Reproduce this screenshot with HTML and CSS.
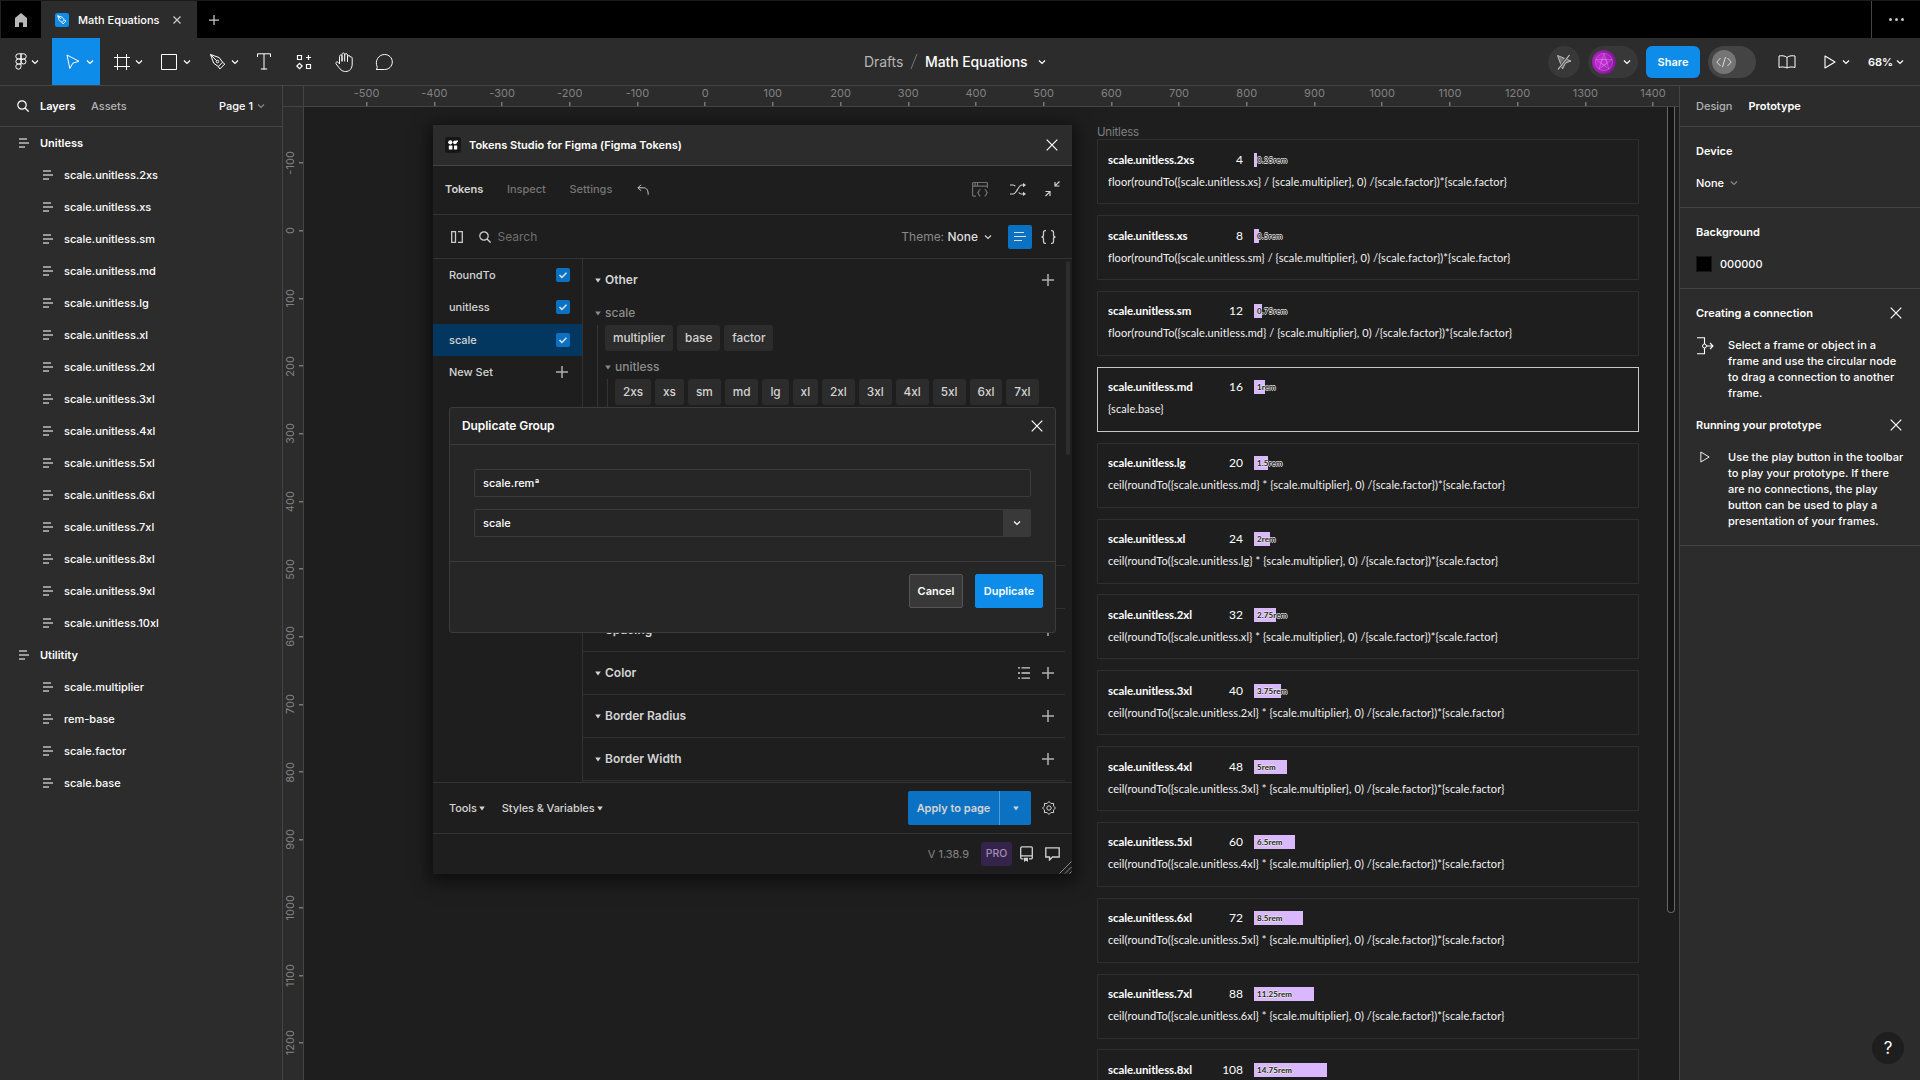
FILE: index.html
```html
<!DOCTYPE html>
<html lang="en">
<head>
<meta charset="utf-8">
<title>Math Equations</title>
<link rel="stylesheet" href="styles.css">
</head>
<body>
<svg class="defs" width="0" height="0">
  <symbol id="chev" viewBox="0 0 8 8"><path d="M1 2.500l3 3 3-3" fill="none" stroke="currentColor" stroke-width="1.200"/></symbol>
  <symbol id="rows" viewBox="0 0 10 10"><path d="M0 1h8M0 5h10M0 9h6" stroke="currentColor" stroke-width="2"/></symbol>
  <symbol id="close" viewBox="0 0 12 12"><path d="M.7.7l10.600 10.600M11.300.7L.7 11.300" stroke="currentColor" stroke-width="1.200"/></symbol>
  <symbol id="close-small" viewBox="0 0 8 8"><path d="M.5.5l7 7M7.500.5l-7 7" stroke="currentColor" stroke-width="1.200"/></symbol>
  <symbol id="plus" viewBox="0 0 12 12"><path d="M6 0v12M0 6h12" stroke="currentColor" stroke-width="1.500"/></symbol>
  <symbol id="tri" viewBox="0 0 6 5"><path d="M.2.5h5.600L3 4.600z" fill="currentColor"/></symbol>
  <symbol id="search" viewBox="0 0 12 12"><circle cx="5" cy="5" r="4.200" fill="none" stroke="currentColor" stroke-width="1.200"/><path d="M8 8l3.600 3.600" stroke="currentColor" stroke-width="1.300"/></symbol>
  <symbol id="check" viewBox="0 0 14 14"><path d="M3.500 7l2.400 2.500 4.600-4.800" fill="none" stroke="currentColor" stroke-width="1.500"/></symbol>
  <symbol id="play" viewBox="0 0 12 14"><path d="M1 1v12l10-6z" fill="none" stroke="currentColor" stroke-width="1.100" stroke-linejoin="round"/></symbol>
  <symbol id="pen" viewBox="0 0 18 18"><path d="M1.500 1.500l3.200 8.700 4.600 3.300 4.300-4.300L10.200 4.600zM1.500 1.500l6.200 6.200M9.300 13.500l1.500 2.500 5-5-2.300-1.700" fill="none" stroke="currentColor" stroke-linejoin="round"/><circle cx="8.500" cy="8.500" r="1.300" fill="none" stroke="currentColor"/></symbol>
</svg>

<header class="tabbar">
  <div class="home"><svg width="14" height="14" viewBox="0 0 14 14"><path d="M7 0L1 5v9h4V9.500h4V14h4V5z" fill="#b8b8b8"/></svg></div>
  <div class="tab">
    <span class="file-icon"><svg width="10" height="10" viewBox="0 0 10 10"><path d="M.7.700l1.500 4.600 2.800 2L7.300 5l-2-2.800zM.7.700l3.300 3.300M5 7.300l1 1.700 3-3-1.700-1" fill="none" stroke="#fff" stroke-width=".9"/></svg></span>
    <span class="tab-name">Math Equations</span>
    <svg class="tab-close" width="8" height="8"><use href="#close-small"/></svg>
  </div>
  <svg class="tab-add" width="10" height="10"><use href="#plus"/></svg>
  <div class="tab-more"><i></i><i></i><i></i></div>
</header>

<div class="toolbar">
  <div class="tools">
    <div class="tool fig"><svg width="12" height="17" viewBox="0 0 12 17"><path d="M6 .8H3.400a2.600 2.600 0 0 0 0 5.200H6zM6 .8h2.600a2.600 2.600 0 0 1 0 5.200H6zM6 6H3.400a2.500 2.500 0 0 0 0 5H6zM6 11H3.400A2.600 2.600 0 1 0 6 13.600z" fill="none" stroke="currentColor"/><circle cx="8.500" cy="8.500" r="2.500" fill="none" stroke="currentColor"/></svg><svg width="8" height="8"><use href="#chev"/></svg></div>
    <div class="tool active"><svg width="14" height="16" viewBox="0 0 14 16"><path d="M1 1l12 6.300-6 1.700-3.200 5.500z" fill="none" stroke="currentColor" stroke-linejoin="round"/></svg><svg width="8" height="8"><use href="#chev"/></svg></div>
    <div class="tool grid"><svg width="16" height="16" viewBox="0 0 16 16"><path d="M3.500 0v16M12.500 0v16M0 3.500h16M0 12.500h16" stroke="currentColor"/></svg><svg width="8" height="8"><use href="#chev"/></svg></div>
    <div class="tool"><svg width="16" height="16" viewBox="0 0 16 16"><path d="M.5.5h15v15H.5z" fill="none" stroke="currentColor"/></svg><svg width="8" height="8"><use href="#chev"/></svg></div>
    <div class="tool pen"><svg width="18" height="18"><use href="#pen"/></svg><svg width="8" height="8"><use href="#chev"/></svg></div>
    <div class="tool single"><svg width="14" height="17" viewBox="0 0 14 17"><path d="M.5 4V.8h13V4M7 1v15.500M3.800 16h6.400" fill="none" stroke="currentColor"/></svg></div>
    <div class="tool single"><svg width="16" height="16" viewBox="0 0 16 16"><path d="M1.500 1.500h4v4h-4zM10.500 10.500h4v4h-4zM3.500 9.300l2.700 2.700-2.700 2.700L.8 12zM12.500 1v5M10 3.500h5" fill="none" stroke="currentColor" stroke-width="1.200"/></svg></div>
    <div class="tool single"><svg width="18" height="20" viewBox="0 0 18 20"><path d="M4.500 11.500V4.500c0-2 2.500-2 2.500 0V9M7 9V2.500c0-2 2.700-2 2.700 0V9M9.700 3c0-2 2.800-2 2.800.2V9.500M12.500 5c0-2 2.700-2 2.700 0v0c1.200-.5 2 .2 2 1.500V12c0 4.500-2.500 7.500-6.500 7.500-4 0-5.200-1.800-9.500-7.500-1-1.800.8-3 2.300-1.300l1 1" fill="none" stroke="currentColor" stroke-linecap="round"/></svg></div>
    <div class="tool single"><svg width="18" height="18" viewBox="0 0 18 18"><path d="M1 16.500c1-.5 1.200-2 1.200-2.700C-.5 8 3.500 1.500 9.500 1.500c4.500 0 7.800 3.300 7.800 7.500s-3.300 7.500-7.800 7.500z" fill="none" stroke="currentColor" stroke-linejoin="round"/></svg></div>
  </div>
  <div class="doc"><span class="drafts">Drafts</span><svg class="slash" width="8" height="17" viewBox="0 0 8 17"><path d="M1 16L7 1" stroke="currentColor"/></svg><span class="doc-name">Math Equations</span><svg width="8" height="8"><use href="#chev"/></svg></div>
  <div class="actions">
    <div class="round"><svg width="18" height="18" viewBox="0 0 18 18"><path d="M2.500 2.500L16 8l-5.500 2L7.500 16z" fill="#777" stroke="#bbb"/><path d="M14.500 1.500L2.500 17" stroke="#383838" stroke-width="2.600"/><path d="M14.500 2L3 16.500" stroke="#ccc" stroke-width="1.200"/></svg></div>
    <div class="user"><span class="avatar"><svg width="24" height="24" viewBox="0 0 24 24"><g fill="none" stroke="#d9a5e8" stroke-opacity=".5" stroke-width=".7"><circle cx="12" cy="12" r="8.500"/><circle cx="12" cy="12" r="3"/><path d="M12 3.500L17 19 4 9.500h16L7 19z"/></g></svg></span><svg width="8" height="8"><use href="#chev"/></svg></div>
    <div class="share">Share</div>
    <div class="devmode"><span class="knob"><svg width="16" height="10" viewBox="0 0 16 10"><path d="M4.500 1L.8 5l3.700 4M11.500 1l3.700 4-3.700 4M9.500 0l-3 10" fill="none" stroke="#ddd"/></svg></span></div>
    <svg class="book" width="18" height="14" viewBox="0 0 18 14"><path d="M9 2.500C7 .5 3 .5 1 1v11.500c2-.8 6-.8 8 .5 2-1.300 6-1.300 8-.5V1c-2-.5-6-.5-8 1.500zV13" fill="none" stroke="currentColor" stroke-linejoin="round"/></svg>
    <svg class="present" width="12" height="14"><use href="#play"/></svg>
    <svg class="present-chev" width="8" height="8"><use href="#chev"/></svg>
    <span class="zoom">68%</span>
    <svg width="8" height="8"><use href="#chev"/></svg>
  </div>
</div>

<div class="main">
  <aside class="layers">
    <div class="panel-head">
      <svg width="12" height="12"><use href="#search"/></svg>
      <b>Layers</b><span class="assets">Assets</span><span class="page">Page 1 <svg width="8" height="8"><use href="#chev"/></svg></span>
    </div>
    <div class="layer top"><svg><use href="#rows"/></svg>Unitless</div>
    <div class="layer"><svg><use href="#rows"/></svg>scale.unitless.2xs</div>
    <div class="layer"><svg><use href="#rows"/></svg>scale.unitless.xs</div>
    <div class="layer"><svg><use href="#rows"/></svg>scale.unitless.sm</div>
    <div class="layer"><svg><use href="#rows"/></svg>scale.unitless.md</div>
    <div class="layer"><svg><use href="#rows"/></svg>scale.unitless.lg</div>
    <div class="layer"><svg><use href="#rows"/></svg>scale.unitless.xl</div>
    <div class="layer"><svg><use href="#rows"/></svg>scale.unitless.2xl</div>
    <div class="layer"><svg><use href="#rows"/></svg>scale.unitless.3xl</div>
    <div class="layer"><svg><use href="#rows"/></svg>scale.unitless.4xl</div>
    <div class="layer"><svg><use href="#rows"/></svg>scale.unitless.5xl</div>
    <div class="layer"><svg><use href="#rows"/></svg>scale.unitless.6xl</div>
    <div class="layer"><svg><use href="#rows"/></svg>scale.unitless.7xl</div>
    <div class="layer"><svg><use href="#rows"/></svg>scale.unitless.8xl</div>
    <div class="layer"><svg><use href="#rows"/></svg>scale.unitless.9xl</div>
    <div class="layer"><svg><use href="#rows"/></svg>scale.unitless.10xl</div>
    <div class="layer top"><svg><use href="#rows"/></svg>Utilitity</div>
    <div class="layer"><svg><use href="#rows"/></svg>scale.multiplier</div>
    <div class="layer"><svg><use href="#rows"/></svg>rem-base</div>
    <div class="layer"><svg><use href="#rows"/></svg>scale.factor</div>
    <div class="layer"><svg><use href="#rows"/></svg>scale.base</div>
  </aside>

  <div class="workspace">
    <div class="ruler-corner"></div>
    <div class="ruler-x"><span>-500</span><span>-400</span><span>-300</span><span>-200</span><span>-100</span><span>0</span><span>100</span><span>200</span><span>300</span><span>400</span><span>500</span><span>600</span><span>700</span><span>800</span><span>900</span><span>1000</span><span>1100</span><span>1200</span><span>1300</span><span>1400</span></div>
    <div class="ruler-y"><span><i>-100</i></span><span><i>0</i></span><span><i>100</i></span><span><i>200</i></span><span><i>300</i></span><span><i>400</i></span><span><i>500</i></span><span><i>600</i></span><span><i>700</i></span><span><i>800</i></span><span><i>900</i></span><span><i>1000</i></span><span><i>1100</i></span><span><i>1200</i></span></div>
    <div class="canvas">
      <section class="frame">
        <div class="frame-name">Unitless</div>
        <div class="card"><div class="line"><b>scale.unitless.2xs</b><span class="num">4</span><span class="bar" style="width:2.7px"><em>0.25rem</em></span></div><p>floor(roundTo({scale.unitless.xs} / {scale.multiplier}, 0) /{scale.factor})*{scale.factor}</p></div>
        <div class="card"><div class="line"><b>scale.unitless.xs</b><span class="num">8</span><span class="bar" style="width:5.4px"><em>0.5rem</em></span></div><p>floor(roundTo({scale.unitless.sm} / {scale.multiplier}, 0) /{scale.factor})*{scale.factor}</p></div>
        <div class="card"><div class="line"><b>scale.unitless.sm</b><span class="num">12</span><span class="bar" style="width:8.1px"><em>0.75rem</em></span></div><p>floor(roundTo({scale.unitless.md} / {scale.multiplier}, 0) /{scale.factor})*{scale.factor}</p></div>
        <div class="card selected"><div class="line"><b>scale.unitless.md</b><span class="num">16</span><span class="bar" style="width:10.8px"><em>1rem</em></span></div><p>{scale.base}</p></div>
        <div class="card"><div class="line"><b>scale.unitless.lg</b><span class="num">20</span><span class="bar" style="width:13.5px"><em>1.5rem</em></span></div><p>ceil(roundTo({scale.unitless.md} * {scale.multiplier}, 0) /{scale.factor})*{scale.factor}</p></div>
        <div class="card"><div class="line"><b>scale.unitless.xl</b><span class="num">24</span><span class="bar" style="width:16.2px"><em>2rem</em></span></div><p>ceil(roundTo({scale.unitless.lg} * {scale.multiplier}, 0) /{scale.factor})*{scale.factor}</p></div>
        <div class="card"><div class="line"><b>scale.unitless.2xl</b><span class="num">32</span><span class="bar" style="width:21.7px"><em>2.75rem</em></span></div><p>ceil(roundTo({scale.unitless.xl} * {scale.multiplier}, 0) /{scale.factor})*{scale.factor}</p></div>
        <div class="card"><div class="line"><b>scale.unitless.3xl</b><span class="num">40</span><span class="bar" style="width:27.1px"><em>3.75rem</em></span></div><p>ceil(roundTo({scale.unitless.2xl} * {scale.multiplier}, 0) /{scale.factor})*{scale.factor}</p></div>
        <div class="card"><div class="line"><b>scale.unitless.4xl</b><span class="num">48</span><span class="bar" style="width:32.5px"><em>5rem</em></span></div><p>ceil(roundTo({scale.unitless.3xl} * {scale.multiplier}, 0) /{scale.factor})*{scale.factor}</p></div>
        <div class="card"><div class="line"><b>scale.unitless.5xl</b><span class="num">60</span><span class="bar" style="width:40.6px"><em>6.5rem</em></span></div><p>ceil(roundTo({scale.unitless.4xl} * {scale.multiplier}, 0) /{scale.factor})*{scale.factor}</p></div>
        <div class="card"><div class="line"><b>scale.unitless.6xl</b><span class="num">72</span><span class="bar" style="width:48.7px"><em>8.5rem</em></span></div><p>ceil(roundTo({scale.unitless.5xl} * {scale.multiplier}, 0) /{scale.factor})*{scale.factor}</p></div>
        <div class="card"><div class="line"><b>scale.unitless.7xl</b><span class="num">88</span><span class="bar" style="width:59.6px"><em>11.25rem</em></span></div><p>ceil(roundTo({scale.unitless.6xl} * {scale.multiplier}, 0) /{scale.factor})*{scale.factor}</p></div>
        <div class="card"><div class="line"><b>scale.unitless.8xl</b><span class="num">108</span><span class="bar" style="width:73.1px"><em>14.75rem</em></span></div></div>
      </section>

      <section class="plugin">
        <div class="p-title"><span class="p-logo"><svg width="10" height="10" viewBox="0 0 10 10" fill="#fff"><circle cx="2.300" cy="2.300" r="2.100"/><circle cx="7" cy="2.300" r="1.900"/><circle cx="9" cy="1.300" r="1"/><rect x=".8" y="5.600" width="3.600" height="3.800" rx=".5"/><rect x="6" y="5.600" width="3.200" height="3.800" rx=".5"/></svg></span>Tokens Studio for Figma (Figma Tokens)<svg class="end" width="12" height="12"><use href="#close"/></svg></div>
        <div class="p-tabs"><b>Tokens</b><span>Inspect</span><span>Settings</span>
          <svg class="undo" width="12" height="11" viewBox="0 0 12 11"><path d="M4 .8L1 3.800l3 3M1 3.800h5.500c3.500 0 4.700 2.700 4.700 7" fill="none" stroke="currentColor"/></svg>
          <svg class="end browser" width="16" height="15" viewBox="0 0 16 15"><path d="M4 14.200H1.600a1 1 0 0 1-1-1V1.500a1 1 0 0 1 1-1h12.800a1 1 0 0 1 1 1V6M.5 4.200h15M3 .5v3.500M5.500.5v3.500M8.500 7.500c-2 0-1.300 2-2.700 3.300 1.400 1 .7 3.200 2.700 3.200M12.500 7.500c2 0 1.300 2 2.700 3.300-1.400 1-.7 3.200-2.700 3.200" fill="none" stroke="currentColor" stroke-width="1.200"/></svg>
          <svg class="shuffle" width="16" height="13" viewBox="0 0 16 13"><path d="M0 11h3c4 0 5-9 9-9h2.500M0 2h3c1 0 1.800.5 2.300 1.300M8.700 9.500c.8 1 1.800 1.500 2.800 1.500h3" fill="none" stroke="currentColor" stroke-width="1.200"/><path d="M13 0l3 2-3 2.200zM13 8.800l3 2.200-3 2z" fill="currentColor"/></svg>
          <svg class="shrink" width="15" height="16" viewBox="0 0 15 16"><path d="M14.500.5l-4.200 4.200M10 1v4h4.500M.5 15l4.200-4.200M.5 10.500H5V15" fill="none" stroke="currentColor" stroke-width="1.200"/></svg>
        </div>
        <div class="p-search"><svg width="12" height="12" viewBox="0 0 12 12"><path d="M.7.7h3.800v10.600H.7zM7 .7h4.300v10.600H7" fill="none" stroke="#ccc" stroke-width="1.300"/></svg><svg class="mag" width="12" height="12"><use href="#search"/></svg><span class="ph">Search</span><span class="theme">Theme: <b>None</b></span><svg class="theme-chev" width="8" height="8"><use href="#chev"/></svg><span class="view"><svg width="12" height="10" viewBox="0 0 12 10"><path d="M0 .5h10M0 4.500h12M0 8.500h8" stroke="#ddd"/></svg></span><svg class="braces" width="15" height="14" viewBox="0 0 15 14"><path d="M5 .7H4.200q-1.700 0-1.700 1.600V5q0 2-2 2 2 0 2 2v2.700q0 1.600 1.700 1.600H5M10 .7h.8q1.700 0 1.700 1.600V5q0 2 2 2-2 0-2 2v2.700q0 1.600-1.700 1.600H10" fill="none" stroke="#ccc" stroke-width="1.300"/></svg></div>
        <div class="p-body">
          <div class="sets">
            <div class="set">RoundTo<span class="cb"><svg width="14" height="14"><use href="#check"/></svg></span></div>
            <div class="set tall">unitless<span class="cb"><svg width="14" height="14"><use href="#check"/></svg></span></div>
            <div class="set on">scale<span class="cb"><svg width="14" height="14"><use href="#check"/></svg></span></div>
            <div class="set new">New Set<svg width="12" height="12"><use href="#plus"/></svg></div>
          </div>
          <div class="tokens">
            <div class="other">
              <div class="t-head"><svg class="tri" width="6" height="5"><use href="#tri"/></svg>Other<svg class="add" width="12" height="12"><use href="#plus"/></svg></div>
              <div class="group"><svg class="tri" width="6" height="5"><use href="#tri"/></svg>scale</div>
              <div class="nest">
                <div class="chips"><span>multiplier</span><span>base</span><span>factor</span></div>
                <div class="group inner"><svg class="tri" width="6" height="5"><use href="#tri"/></svg>unitless</div>
                <div class="nest two"><div class="chips"><span>2xs</span><span>xs</span><span>sm</span><span>md</span><span>lg</span><span>xl</span><span>2xl</span><span>3xl</span><span>4xl</span><span>5xl</span><span>6xl</span><span>7xl</span></div></div>
              </div>
            </div>
            <div class="t-row"></div>
            <div class="t-row"><svg class="tri" width="6" height="5"><use href="#tri"/></svg>Spacing<svg class="add" width="12" height="12"><use href="#plus"/></svg></div>
            <div class="t-row"><svg class="tri" width="6" height="5"><use href="#tri"/></svg>Color<svg class="list" width="12" height="12" viewBox="0 0 12 12"><path d="M0 .8h2M3.500.8H12M0 6h2M3.500 6H12M0 11.200h2M3.500 11.200H12" stroke="#ccc" stroke-width="1.300"/></svg><svg class="add" width="12" height="12"><use href="#plus"/></svg></div>
            <div class="t-row"><svg class="tri" width="6" height="5"><use href="#tri"/></svg>Border Radius<svg class="add" width="12" height="12"><use href="#plus"/></svg></div>
            <div class="t-row"><svg class="tri" width="6" height="5"><use href="#tri"/></svg>Border Width<svg class="add" width="12" height="12"><use href="#plus"/></svg></div>
          </div>
          <div class="thumb"></div>
        </div>
        <div class="p-foot"><span>Tools<svg width="6" height="5"><use href="#tri"/></svg></span><span class="sv">Styles &amp; Variables<svg width="6" height="5"><use href="#tri"/></svg></span>
          <div class="apply"><b>Apply to page</b><i><svg width="6" height="5"><use href="#tri"/></svg></i></div>
          <svg class="gear" width="14" height="14" viewBox="0 0 14 14"><path d="M13.500 7L11.500 8.900 11.600 11.600 8.900 11.500 7 13.500 5.100 11.500 2.400 11.600 2.500 8.900.5 7 2.500 5.100 2.400 2.400 5.100 2.500 7 .5 8.900 2.500 11.600 2.400 11.500 5.100z" fill="none" stroke="currentColor" stroke-linejoin="round"/><circle cx="7" cy="7" r="2.200" fill="none" stroke="currentColor"/></svg>
        </div>
        <div class="p-status"><span class="ver">V 1.38.9</span><span class="pro">PRO</span>
          <svg class="repo" width="13" height="16" viewBox="0 0 13 16"><path d="M3.500 12.800H1.800c-.8 0-1.100-.5-1.100-1.300V2.200C.7 1.200 1.200.8 2 .8h9.300c.7 0 1 .4 1 1v9.900c0 .7-.3 1.100-1 1.100H9M1 9.800h11" fill="none" stroke="currentColor" stroke-width="1.300"/><path d="M4 11.800h4V16l-2-1.500L4 16z" fill="currentColor"/></svg>
          <svg class="note" width="15" height="14" viewBox="0 0 15 14"><path d="M.8.8h13.400v9.200H7.500L4.500 13v-3H.8z" fill="none" stroke="currentColor" stroke-width="1.300"/></svg>
        </div>
        <svg class="grip" width="13" height="13" viewBox="0 0 13 13"><path d="M.5 12.500l12-12M6 12.500L12.500 6M10.500 12.500l2-2" stroke="#888"/></svg>

        <div class="modal">
          <div class="m-head">Duplicate Group<svg width="12" height="12"><use href="#close"/></svg></div>
          <div class="m-body"><div class="field">scale.remª</div><div class="field">scale<i><svg width="8" height="8"><use href="#chev"/></svg></i></div></div>
          <div class="m-foot"><span class="btn">Cancel</span><span class="btn primary">Duplicate</span></div>
        </div>
      </section>
      <div class="vscroll"></div>
    </div>
  </div>

  <aside class="inspector">
    <div class="panel-head"><span class="design">Design</span><b>Prototype</b></div>
    <div class="sec device"><b>Device</b><div class="val">None <svg width="8" height="8"><use href="#chev"/></svg></div></div>
    <div class="sec bg"><b>Background</b><div class="val"><i class="swatch"></i>000000</div></div>
    <div class="sec tips">
      <div class="tip-head"><b>Creating a connection</b><svg width="12" height="12"><use href="#close"/></svg></div>
      <div class="tip"><svg width="18" height="18" viewBox="0 0 18 18"><path d="M1 .8h7.500V7M1 16.800h7.500V11M10.500 9h6.500M14 6l3 3-3 3" fill="none" stroke="currentColor" stroke-width="1.100"/><circle cx="8.500" cy="9" r="2" fill="none" stroke="currentColor"/></svg><p>Select a frame or object in a<br>frame and use the circular node<br>to drag a connection to another<br>frame.</p></div>
      <div class="tip-head"><b>Running your prototype</b><svg width="12" height="12"><use href="#close"/></svg></div>
      <div class="tip"><svg class="tplay" width="10" height="12"><use href="#play"/></svg><p>Use the play button in the toolbar<br>to play your prototype. If there<br>are no connections, the play<br>button can be used to play a<br>presentation of your frames.</p></div>
    </div>
    <div class="help">?</div>
  </aside>
</div>
</body>
</html>
```
FILE: styles.css
```css
* { box-sizing: border-box; }
body { margin: 0; width: 1920px; height: 1080px; overflow: hidden; background: #1e1e1e; color: #fff; font: 500 11px/16px Inter, sans-serif; letter-spacing: -.01px; display: flex; flex-direction: column; }
svg { display: block; flex: none; }
.defs { position: absolute; }
b { font-weight: 600; }
p { margin: 0; }
i, em { font-style: normal; }

.tabbar { height: 38px; background: #000; border-top: 1px solid #1a1a1a; border-left: 1px solid #222; display: flex; align-items: center; flex: none; }
.home { width: 40px; height: 37px; display: flex; align-items: center; justify-content: center; }
.tab { width: 156px; height: 37px; background: #2c2c2c; display: flex; align-items: center; padding-left: 14px; }
.file-icon { width: 14px; height: 14px; border-radius: 2px; background: #0d8ce9; display: flex; align-items: center; justify-content: center; }
.tab-name { margin-left: 9px; width: 95px; white-space: nowrap; }
.tab-close { color: #ccc; }
.tab-add { margin-left: 12px; color: #ccc; }
.tab-more { margin-left: auto; width: 49px; height: 37px; border-left: 1px solid #444; display: flex; align-items: center; justify-content: center; gap: 3px; }
.tab-more i { width: 3px; height: 3px; border-radius: 50%; background: #c4c4c4; }

.toolbar { height: 48px; background: #2c2c2c; border-bottom: 1px solid #444; display: flex; align-items: center; flex: none; }
.tools { display: flex; height: 47px; }
.tool { width: 48px; display: flex; align-items: center; padding-left: 13px; gap: 6px; }
.tool.fig { width: 52px; padding-left: 15px; gap: 4px; }
.tool.active { background: #0d8ce9; padding-left: 14px; gap: 6px; }
.tool.grid { padding-left: 14px; gap: 5px; }
.tool.pen { padding-left: 13px; gap: 4px; }
.tool.single { width: 40px; padding: 0; justify-content: center; }
.doc { display: flex; align-items: center; font-size: 14px; margin-left: 460px; letter-spacing: -0.1px; }
.drafts { color: #b5b5b5; font-weight: 400; width: 46px; }
.slash { color: #777; }
.doc-name { margin: 0 9px 0 7px; width: 104px; white-space: nowrap; }
.actions { display: flex; align-items: center; margin-left: auto; padding-right: 16px; }
.round { width: 32px; height: 32px; border-radius: 50%; background: #383838; display: flex; align-items: center; justify-content: center; margin-right: 8px; }
.user { width: 50px; height: 32px; border-radius: 16px; background: #383838; display: flex; align-items: center; padding-left: 4px; gap: 7px; }
.avatar { width: 24px; height: 24px; border-radius: 50%; background: radial-gradient(circle at 40% 50%, #c42bd6 20%, #9a1cae 55%, #4b1259 100%); }
.share { width: 54px; height: 32px; border-radius: 6px; background: #0d8ce9; font-weight: 600; display: flex; align-items: center; justify-content: center; margin: 0 8px; }
.devmode { width: 48px; height: 32px; border-radius: 16px; background: #444; padding: 4px; }
.knob { width: 24px; height: 24px; border-radius: 50%; background: #757575; display: flex; align-items: center; justify-content: center; }
.book { margin-left: 22px; }
.present { margin-left: 28px; }
.present-chev { margin-left: 6px; }
.zoom { width: 24px; margin: 0 4px 0 18px; font-weight: 600; }

.main { display: flex; flex: 1; min-height: 0; }
.layers { width: 283px; background: #2c2c2c; border-right: 1px solid #444; }
.panel-head { height: 41px; border-bottom: 1px solid #444; display: flex; align-items: center; }
.layers .panel-head { padding: 0 17px 0 17px; }
.panel-head b { margin-left: 11px; width: 51px; }
.assets, .design { color: #b3b3b3; }
.page { margin-left: auto; display: flex; align-items: center; gap: 4px; }
.page svg, .val svg { color: #888; }
.layer { height: 32px; padding-left: 43px; display: flex; align-items: center; gap: 11px; }
.layer svg { width: 10px; height: 10px; color: #999; }
.layer.top { padding-left: 19px; font-weight: 600; }

.workspace { width: 1396px; display: grid; grid-template: 21px 1fr / 21px 1fr; }
.ruler-corner, .ruler-x, .ruler-y { background: #2c2c2c; color: #828282; font-weight: 400; overflow: hidden; letter-spacing: .05px; }
.ruler-corner, .ruler-x { border-bottom: 1px solid #444; }
.ruler-corner, .ruler-y { border-right: 1px solid #444; }
.ruler-x { display: flex; padding-left: 28.800px; }
.ruler-x span { flex: none; width: 67.710px; text-align: center; line-height: 15px; background: linear-gradient(#777, #777) 50% 100% / 1.500px 4px no-repeat; }
.ruler-y { display: flex; flex-direction: column; padding-top: 22px; }
.ruler-y span { flex: none; height: 67.710px; display: flex; align-items: center; justify-content: center; padding-right: 6px; background: linear-gradient(#777, #777) 100% 50% / 4px 1.500px no-repeat; }
.ruler-y i { writing-mode: vertical-rl; transform: rotate(180deg); }
.canvas { position: relative; overflow: hidden; background: #1e1e1e; }

.frame { position: absolute; left: 793px; top: 16px; width: 542px; font-family: Lato, sans-serif; }
.frame-name { height: 16.300px; font: 400 11.500px/18px Inter, sans-serif; letter-spacing: -.2px; color: #808080; }
.card { height: 65px; margin-bottom: 10.850px; border: 1px solid #2f2f2f; padding: 11.500px 0 0 10px; }
.card.selected { border-color: #c8c8c8; }
.line { display: flex; align-items: center; height: 16px; font-size: 12px; }
.line b { width: 100px; font-weight: 700; font-size: 11.500px; letter-spacing: -.1px; }
.num { width: 35px; text-align: right; margin-right: 11px; font-weight: 400; }
.bar { height: 14px; background: #d9b8ff; padding-left: 3px; white-space: nowrap; }
.bar em { display: block; width: 0; font-size: 8px; line-height: 14px; font-weight: 700; letter-spacing: .1px; color: #1e1e1e; text-shadow: .6px 0 .3px #e4e4e4, -.6px 0 .3px #e4e4e4, 0 .6px .3px #e4e4e4, 0 -.6px .3px #e4e4e4; }
.card p { font-size: 11px; line-height: 16px; margin-top: 6px; font-weight: 400; color: #f2f2f2; white-space: nowrap; letter-spacing: .078px; }

.plugin { position: absolute; left: 129px; top: 18px; width: 639px; height: 749px; background: #1e1e1e; box-shadow: 0 4px 16px 4px rgba(0,0,0,.55); color: #d4d4d4; display: flex; flex-direction: column; }
.plugin .end { margin-left: auto; }
.p-title { height: 41px; background: #2c2c2c; border-bottom: 1px solid #454545; color: #fff; font-weight: 600; display: flex; align-items: center; padding: 0 14px 0 12px; }
.p-logo { width: 16px; height: 16px; border-radius: 3px; background: #161616; display: flex; align-items: center; justify-content: center; margin-right: 8px; }
.p-tabs { height: 49px; border-bottom: 1px solid #333; display: flex; align-items: center; padding: 0 12px 2px 12px; }
.p-tabs b { width: 62px; }
.p-tabs span { width: 62.500px; color: #757575; }
.undo { margin-left: 5px; color: #ccc; }
.browser { color: #707070; }
.shuffle { margin-left: 22px; }
.shrink { margin-left: 19px; }
.p-search { height: 44px; border-bottom: 1px solid #333; display: flex; align-items: center; padding: 0 16px 0 18px; font-size: 12px; }
.mag { margin: 0 7px 0 15.500px; }
.ph { color: #707070; font-weight: 400; }
.theme { margin-left: auto; color: #8a8a8a; font-weight: 400; }
.theme b { font-weight: 500; color: #ddd; }
.theme-chev { margin: 0 16px 0 6px; }
.view { width: 24px; height: 24px; border-radius: 2px; background: #0b72c3; display: flex; align-items: center; justify-content: center; margin-right: 9px; }
.p-body { display: flex; height: 523px; position: relative; overflow: hidden; }
.sets { width: 150px; border-right: 1px solid #333; }
.set { height: 32px; padding: 0 12px 0 16px; display: flex; align-items: center; justify-content: space-between; }
.set.tall { height: 33px; padding-bottom: 2px; }
.set.on { background: #04375f; }
.set.new { padding-right: 14px; }
.set svg, .add { color: #b0b0b0; }
.cb { width: 14px; height: 14px; border-radius: 2px; background: #0b72c3; }
.cb svg { color: #e4e4e4; }
.tokens { width: 482px; font-size: 12px; }
.other { height: 307px; border-bottom: 1px solid #303030; }
.t-head, .t-row { height: 43px; display: flex; align-items: center; padding: 0 11px 0 12px; font-weight: 600; }
.t-head { height: 42px; }
.t-row { border-bottom: 1px solid #303030; }
.tri { margin-right: 4px; }
.add { margin-left: auto; }
.list { margin-left: auto; }
.list + .add { margin-left: 12px; }
.group { height: 24px; display: flex; align-items: center; padding: 0 0 0 12px; color: #8c8c8c; font-weight: 500; }
.group.inner { height: 28px; padding: 4px 0 0 7px; }
.nest { margin-left: 14px; border-left: 1px solid #333; height: 183px; }
.nest.two { margin-left: 9px; height: 129px; }
.chips { display: flex; gap: 4px; padding-left: 7px; font-size: 11.800px; letter-spacing: -.04px; }
.chips span { height: 26px; line-height: 26px; border-radius: 3px; background: #2c2c2c; padding: 0 8px; }
.thumb { position: absolute; right: 2px; top: 2px; width: 4px; height: 194px; border-radius: 2px; background: #2e2e2e; }
.p-foot { height: 52px; border-top: 1px solid #333; border-bottom: 1px solid #333; display: flex; align-items: center; padding: 0 16px 0 16px; }
.p-foot span { display: flex; align-items: center; gap: 2px; letter-spacing: -.1px; }
.p-foot .sv { margin-left: 17px; }
.apply { margin: 0 0 0 auto; height: 34px; width: 123px; border-radius: 2px; background: #0b72c3; display: flex; align-items: center; overflow: hidden; }
.apply b { width: 92px; height: 34px; line-height: 34px; text-align: center; border-right: 1px solid #4a9cdb; }
.apply i { flex: 1; display: flex; justify-content: center; }
.gear { margin-left: 11px; }
.p-status { flex: 1; display: flex; align-items: center; justify-content: flex-end; padding-right: 12px; }
.ver { color: #868686; font-weight: 400; margin-right: 12px; }
.pro { width: 31px; height: 24px; line-height: 24px; text-align: center; border-radius: 3px; background: #34234a; color: #a48dbb; font-size: 10.500px; }
.repo { margin: 0 12px 0 8px; }
.grip { position: absolute; right: 0; bottom: 0; }

.modal { position: absolute; left: 16px; top: 282px; width: 607px; height: 226px; background: #262626; border: 1px solid #3c3c3c; border-radius: 3px; color: #fff; }
.m-head { height: 37px; border-bottom: 1px solid #3c3c3c; display: flex; align-items: center; justify-content: space-between; padding: 0 12px; font-size: 12px; font-weight: 600; letter-spacing: -.08px; }
.m-body { height: 117px; border-bottom: 1px solid #3c3c3c; padding: 24px 24px 0; display: flex; flex-direction: column; gap: 12px; }
.field { height: 28px; border: 1px solid #3c3c3c; border-radius: 2px; padding-left: 8px; display: flex; align-items: center; justify-content: space-between; }
.field i { width: 28px; height: 28px; margin-right: -1px; background: #393939; border-radius: 0 2px 2px 0; display: flex; align-items: center; justify-content: center; }
.m-foot { display: flex; justify-content: flex-end; gap: 12px; padding: 12px; }
.btn { height: 34px; width: 54px; line-height: 32px; text-align: center; border: 1px solid #555; border-radius: 2px; background: #383838; font-weight: 600; }
.btn.primary { width: 68px; border-color: #0d8ce9; background: #0d8ce9; }

.vscroll { position: absolute; left: 1363px; top: -1px; width: 8px; height: 807px; border: 1px solid #666; border-top: 0; border-radius: 0 0 4px 4px; background: #141414; }

.inspector { width: 241px; background: #2c2c2c; border-left: 1px solid #444; position: relative; }
.inspector .panel-head { padding-left: 16px; }
.design { width: 41.500px; }
.sec { border-bottom: 1px solid #444; padding: 0 16px; }
.device, .bg { height: 81px; padding-top: 16px; }
.sec b { display: block; }
.val { display: flex; align-items: center; gap: 6px; margin-top: 16px; }
.swatch { width: 16px; height: 16px; background: #000; border: 1px solid #161616; margin-right: 2px; }
.tips { height: 257px; padding-top: 16px; }
.tip-head { display: flex; align-items: center; justify-content: space-between; padding-right: 2px; }
.tip { display: flex; margin: 16px 0; }
.tip p { margin-left: 14px; white-space: nowrap; letter-spacing: .04px; }
.tplay { margin: 2px 4px 0 4px; }
.help { position: absolute; right: 16px; bottom: 16px; width: 32px; height: 32px; border-radius: 50%; background: #1e1e1e; font: 400 17px/32px Inter, sans-serif; text-align: center; }
```
